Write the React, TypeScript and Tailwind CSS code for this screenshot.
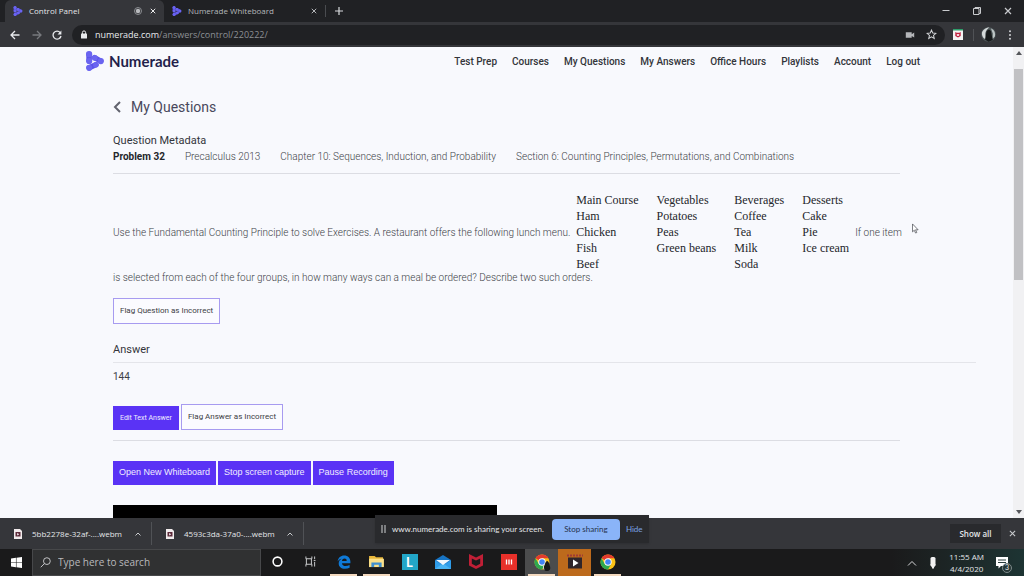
import type { ReactNode } from "react";

const UI_FONT = "font-['Lato','Noto_Sans',sans-serif]";

function NumeradeMark({ className }: { className: string }) {
  return (
    <svg viewBox="0 0 18 20" className={className} aria-hidden="true">
      <g fill="none" stroke="#5b52e8" strokeLinecap="round">
        <path d="M3.100 3.200v6.500" strokeWidth="5.600" />
        <path d="M8.500 6.600l6.200 3.400" strokeWidth="5.400" />
        <path d="M3.200 16.800l6.800-3.200" strokeWidth="5.400" />
      </g>
      <g fill="#6a64f0">
        <circle cx="3.100" cy="3.200" r="3.100" />
        <circle cx="3.200" cy="10" r="3.100" />
        <circle cx="8.800" cy="6.800" r="2.900" />
        <circle cx="14.800" cy="10.100" r="3.100" />
        <circle cx="3.200" cy="16.800" r="3.100" />
        <circle cx="9.800" cy="13.700" r="2.800" />
      </g>
    </svg>
  );
}

function Cross({ className }: { className: string }) {
  return (
    <svg viewBox="0 0 8 8" className={className} fill="none" stroke="currentColor" strokeWidth="1.2" aria-hidden="true">
      <path d="M1 1l6 6M7 1L1 7" />
    </svg>
  );
}

function TabStrip() {
  return (
    <div className="flex h-[22px] shrink-0 items-stretch bg-[#202124] pl-[5px] font-['Open_Sans',sans-serif] text-[8px] text-[#b4b7bb]">
      <div className="flex w-[159px] items-center rounded-t-md bg-[#35363a] px-2 text-[#e4e6e9]">
        <NumeradeMark className="h-[10px] w-[10px]" />
        <span className="ml-[6px] flex-1">Control Panel</span>
        <svg viewBox="0 0 8 8" className="h-2 w-2" aria-hidden="true">
          <circle cx="4" cy="4" r="3.5" fill="none" stroke="#8b8d91" />
          <circle cx="4" cy="4" r="2.2" fill="#b9bbbe" />
        </svg>
        <button aria-label="Close Control Panel" className="ml-2 text-white">
          <Cross className="h-[6px] w-[6px]" />
        </button>
      </div>
      <div className="flex w-[161px] items-center px-2">
        <NumeradeMark className="h-[10px] w-[10px]" />
        <span className="ml-[6px] flex-1">Numerade Whiteboard</span>
        <button aria-label="Close Numerade Whiteboard" className="text-[#c4c6c9]">
          <Cross className="h-[6px] w-[6px]" />
        </button>
      </div>
      <div className="my-auto h-3 w-px bg-[#4a4c50]" />
      <button aria-label="New tab" className="ml-[9px] text-[#d8dadd]">
        <svg viewBox="0 0 8 8" className="h-2 w-2" stroke="currentColor" strokeWidth="1.2" aria-hidden="true">
          <path d="M4 0v8M0 4h8" />
        </svg>
      </button>
      <div className="ml-auto flex items-center gap-[23px] pr-3 text-[#c9cbce]">
        <button aria-label="Minimize">
          <svg viewBox="0 0 8 8" className="h-2 w-2" stroke="currentColor" aria-hidden="true">
            <path d="M.5 3.5h7" />
          </svg>
        </button>
        <button aria-label="Restore">
          <svg viewBox="0 0 8 8" className="h-2 w-2" fill="none" stroke="currentColor" aria-hidden="true">
            <path d="M.5 1.500h5.500v6H.5zM2 1.500V.5h5.500v6H6" />
          </svg>
        </button>
        <button aria-label="Close window">
          <Cross className="h-2 w-2" />
        </button>
      </div>
    </div>
  );
}

function Toolbar() {
  return (
    <div className="flex h-[25px] shrink-0 items-center bg-[#35363a] pr-3 pl-[10px]">
      <button aria-label="Back" className="text-[#e8eaed]">
        <svg viewBox="0 0 10 10" className="h-[10px] w-[10px]" fill="none" stroke="currentColor" strokeWidth="1.3" aria-hidden="true">
          <path d="M9.500 5H1M5 1L1 5l4 4" />
        </svg>
      </button>
      <button aria-label="Forward" className="ml-3 text-[#77797d]">
        <svg viewBox="0 0 10 10" className="h-[10px] w-[10px]" fill="none" stroke="currentColor" strokeWidth="1.3" aria-hidden="true">
          <path d="M.5 5H9M5 1l4 4-4 4" />
        </svg>
      </button>
      <button aria-label="Reload" className="ml-[10px] text-[#e8eaed]">
        <svg viewBox="0 0 10 10" className="h-[10px] w-[10px]" aria-hidden="true">
          <path d="M8.200 2.600A4 4 0 1 0 9 6" fill="none" stroke="currentColor" strokeWidth="1.3" />
          <path d="M9.400.6v3.900H5.500z" fill="currentColor" />
        </svg>
      </button>
      <div className="ml-[10px] flex h-5 flex-1 items-center rounded-full bg-[#202124] pr-2 pl-2">
        <svg viewBox="0 0 8 9" className="h-[9px] w-2" aria-hidden="true">
          <rect x="1" y="3.600" width="6" height="5" rx=".6" fill="#e8eaed" />
          <path d="M2.400 4V2.500a1.600 1.600 0 0 1 3.200 0V4" fill="none" stroke="#e8eaed" />
        </svg>
        <p className="ml-[7px] flex-1 font-['Open_Sans',sans-serif] text-[9px] text-[#8d9094]">
          <span className="text-[#e8eaed]">numerade.com</span>/answers/control/220222/
        </p>
        <svg viewBox="0 0 10 8" className="h-2 w-[10px]" fill="#b4b6b9" aria-hidden="true">
          <path d="M.8 1.200h5.900v2L9.200 1.600v4.800L6.700 5v1.800H.8z" />
        </svg>
        <button aria-label="Bookmark this page" className="ml-[11px]">
          <svg viewBox="0 0 12 12" className="h-[11px] w-[11px]" fill="none" stroke="#d0d2d5" strokeWidth="1.1" aria-hidden="true">
            <path d="M6 1.200l1.400 3.200 3.500.3-2.700 2.300.8 3.400L6 8.600l-3 1.800.8-3.400L1.100 4.700l3.500-.3z" />
          </svg>
        </button>
      </div>
      <svg viewBox="0 0 10 11" className="ml-2 h-[11px] w-[10px]" aria-hidden="true">
        <path d="M0 0h10v11H0z" fill="#f4f4f4" />
        <path d="M0 0h10v1.500H0z" fill="#2e9e6b" />
        <path d="M2.300 3l1.400.8h2.600l1.400-.8v4L5 8.600 2.300 7z" fill="#c01f3d" />
        <path d="M3.800 4.800l1.200.7 1.200-.7v1.600L5 7.100l-1.200-.7z" fill="#fff" />
      </svg>
      <div className="ml-[10px] h-3 w-px bg-[#505256]" />
      <svg viewBox="0 0 15 15" className="ml-[7px] h-[15px] w-[15px]" aria-hidden="true">
        <circle cx="7.500" cy="7.500" r="7.300" fill="#50595b" />
        <path d="M1 5.500C2.400 1.600 6 .2 8.500.4 6.200 1.600 4 4.500 4.400 8l1 4.500C2 11.500.6 8.500 1 5.500z" fill="#d3d8d8" />
        <path d="M10 1.500c3.200 1 4.800 4.500 3.900 8l-2.300 2.600.2-5.600z" fill="#bcc4c4" />
        <path d="M5.500 4.500c1-2.300 3.600-2.400 4.500-.2l.8 4.200 1 4.600-4.300 1.600-3.500-2.200z" fill="#16191a" />
      </svg>
      <button aria-label="Chrome menu" className="ml-3">
        <svg viewBox="0 0 4 10" className="h-[10px] w-1" fill="#d0d2d5" aria-hidden="true">
          <circle cx="2" cy="1.200" r="1" />
          <circle cx="2" cy="5" r="1" />
          <circle cx="2" cy="8.800" r="1" />
        </svg>
      </button>
    </div>
  );
}

const NAV = ["Test Prep", "Courses", "My Questions", "My Answers", "Office Hours", "Playlists", "Account", "Log out"];

function SiteHeader() {
  return (
    <header className="flex h-7 items-center justify-between pr-[93px] pl-[86px]">
      <a href="#home" className="flex items-center gap-[5px] font-['Lato',sans-serif] text-[15px] font-bold text-[#231f4b]">
        <NumeradeMark className="h-5 w-[18px]" />
        Numerade
      </a>
      <nav className="flex gap-[15px] text-[10px] font-medium whitespace-nowrap text-[#33353a]">
        {NAV.map((item) => (
          <a key={item} href={"#" + item}>
            {item}
          </a>
        ))}
      </nav>
    </header>
  );
}

const MENU_HEAD = ["Main Course", "Vegetables", "Beverages", "Desserts"];
const MENU_ROWS = [
  ["Ham", "Potatoes", "Coffee", "Cake"],
  ["Chicken", "Peas", "Tea", "Pie"],
  ["Fish", "Green beans", "Milk", "Ice cream"],
  ["Beef", "", "Soda", ""],
];

function LunchMenu() {
  return (
    <table className="font-['Liberation_Serif',serif] text-[12px] leading-4 font-normal whitespace-nowrap text-[#24262b]">
      <thead>
        <tr>
          {MENU_HEAD.map((h) => (
            <th key={h} scope="col" className="p-0 pr-[18px] text-left font-normal last:pr-0">
              {h}
            </th>
          ))}
        </tr>
      </thead>
      <tbody>
        {MENU_ROWS.map((row) => (
          <tr key={row[0]}>
            {row.map((cell, i) => (
              <td key={i} className="p-0 pr-[18px] last:pr-0">
                {cell}
              </td>
            ))}
          </tr>
        ))}
      </tbody>
    </table>
  );
}

function OutlineButton({ children }: { children: ReactNode }) {
  return (
    <button className="h-[26px] border border-[#a79bf0] bg-[#fbfbff] px-[6px] text-[8px] whitespace-nowrap text-[#3b3d44]">
      {children}
    </button>
  );
}

function RecordButton({ children }: { children: ReactNode }) {
  return (
    <button className="h-6 bg-[#5a33f5] px-[6px] font-['Liberation_Sans',sans-serif] text-[9px] whitespace-nowrap text-[#f1eeff]">
      {children}
    </button>
  );
}

function QuestionPage() {
  return (
    <main className="px-[113px] pt-[22px] text-[10px] text-[#3c3f47]">
      <h1 className="flex h-5 items-center gap-[10px] text-[14px] text-[#48485c]">
        <a href="#questions" aria-label="Back to questions">
          <svg viewBox="0 0 8 12" className="h-3 w-2" fill="none" stroke="#62636e" strokeWidth="2" aria-hidden="true">
            <path d="M7 1L2 6l5 5" />
          </svg>
        </a>
        My Questions
      </h1>
      <section className="mt-4 border-b border-[#dcdde3] pb-2">
        <h2 className="text-[11px] leading-4 text-[#33353b]">Question Metadata</h2>
        <div className="flex gap-5 leading-4 font-light whitespace-nowrap">
          <strong className="font-bold text-[#24262b]">Problem 32</strong>
          <span>Precalculus 2013</span>
          <span>Chapter 10: Sequences, Induction, and Probability</span>
          <span>Section 6: Counting Principles, Permutations, and Combinations</span>
        </div>
      </section>
      <section className="mt-[18px]">
        <div className="flex items-center gap-[6px] font-light whitespace-nowrap">
          <span>Use the Fundamental Counting Principle to solve Exercises. A restaurant offers the following lunch menu.</span>
          <LunchMenu />
          <span>If one item</span>
        </div>
        <p className="mb-[14px] leading-3 font-light">
          is selected from each of the four groups, in how many ways can a meal be ordered? Describe two such orders.
        </p>
        <OutlineButton>Flag Question as Incorrect</OutlineButton>
      </section>
      <section className="mt-[18px]">
        <h2 className="-mr-[76px] border-b border-[#e4e5ea] pb-1 text-[11px] leading-4 text-[#33353b]">Answer</h2>
        <p className="mt-[6px] text-[10px] leading-4">144</p>
        <div className="mt-[19px] flex items-end gap-[2px] border-b border-[#dcdde3] pb-[10px]">
          <button className="h-6 bg-[#5a33f5] px-[7px] text-[7px] whitespace-nowrap text-[#f1eeff]">Edit Text Answer</button>
          <OutlineButton>Flag Answer as Incorrect</OutlineButton>
        </div>
      </section>
      <section className="mt-5">
        <div className="flex gap-[2px]">
          <RecordButton>Open New Whiteboard</RecordButton>
          <RecordButton>Stop screen capture</RecordButton>
          <RecordButton>Pause Recording</RecordButton>
        </div>
        <div className="mt-5 h-[216px] w-[384px] bg-black" />
      </section>
    </main>
  );
}

function Scrollbar() {
  return (
    <div className="flex w-[11px] shrink-0 flex-col items-center bg-[#f1f1f3] py-1" aria-hidden="true">
      <svg viewBox="0 0 6 4" className="h-1 w-[6px]" fill="#55575b">
        <path d="M3 0l3 4H0z" />
      </svg>
      <div className="mt-[14px] h-[211px] w-[9px] bg-[#c1c1c4]" />
      <svg viewBox="0 0 6 4" className="mt-auto h-1 w-[6px]" fill="#55575b">
        <path d="M3 4l3-4H0z" />
      </svg>
    </div>
  );
}

function Download({ name }: { name: string }) {
  return (
    <div className="my-1 flex w-[152px] items-center border-r border-[#505256] pl-[14px]">
      <svg viewBox="0 0 8 10" className="h-[10px] w-2" aria-hidden="true">
        <path d="M0 0h6l2 2v8H0z" fill="#f1ebec" />
        <path d="M1.500 3h5v4.500h-5z" fill="#5d2a3a" />
        <path d="M3.200 4l2 1.200-2 1.200z" fill="#fff" />
      </svg>
      <span className="ml-[10px] flex-1">{name}</span>
      <button aria-label={"Options for " + name} className="mr-[10px]">
        <svg viewBox="0 0 6 4" className="h-1 w-[6px]" fill="none" stroke="#c9cbce" aria-hidden="true">
          <path d="M.5 3.500L3 1l2.500 2.500" />
        </svg>
      </button>
    </div>
  );
}

function DownloadShelf() {
  return (
    <div className="flex h-[31px] shrink-0 items-stretch bg-[#35363a] font-['Open_Sans',sans-serif] text-[8px] text-[#e4e6e9]">
      <Download name="5bb2278e-32af-....webm" />
      <Download name="4593c3da-37a0-....webm" />
      <div className="ml-auto flex items-center gap-2 pr-2">
        <button className="h-[19px] w-[51px] bg-[#292a2d] font-semibold">Show all</button>
        <button aria-label="Close downloads" className="text-[#c9cbce]">
          <Cross className="h-[7px] w-[7px]" />
        </button>
      </div>
    </div>
  );
}

function SharingBar() {
  return (
    <div className="absolute bottom-[33px] left-[375px] flex h-7 items-center bg-[#292a2d] px-[6px] text-[8px] whitespace-nowrap text-[#e4e6e9] shadow">
      <svg viewBox="0 0 5 8" className="h-2 w-[5px]" stroke="#d0d2d5" aria-hidden="true">
        <path d="M1 0v8M4 0v8" />
      </svg>
      <span className="ml-[6px]">www.numerade.com is sharing your screen.</span>
      <button className="ml-2 h-[21px] w-[68px] rounded-sm bg-[#8ab4f8] text-[#26334d]">Stop sharing</button>
      <button className="ml-[6px] text-[#7ba3e6]">Hide</button>
    </div>
  );
}

function TaskItem({ label, open, tint, children }: { label: string; open?: boolean; tint?: string; children: ReactNode }) {
  return (
    <button aria-label={label} className={"flex w-[33px] flex-col items-center " + (tint ?? "")}>
      <span className="flex flex-1 items-center">{children}</span>
      <span className={"h-[2px] w-[27px] " + (open ? "bg-[#f3d9bf]" : "")} />
    </button>
  );
}

function ChromeLogo() {
  return (
    <svg viewBox="0 0 16 16" className="h-4 w-4" aria-hidden="true">
      <circle cx="8" cy="8" r="7.500" fill="#fbc116" />
      <path d="M8 8L1.500 4.250A7.500 7.500 0 0 1 14.500 4.250H8z" fill="#e33b2e" />
      <path d="M1.500 4.250A7.500 7.500 0 0 0 8 15.500L11.200 9.900 4.800 9.900z" fill="#2da94f" />
      <circle cx="8" cy="8" r="3.700" fill="#fff" />
      <circle cx="8" cy="8" r="2.800" fill="#4285f4" />
    </svg>
  );
}

function Taskbar() {
  return (
    <div className="flex h-[27px] shrink-0 items-stretch bg-[#1a1a1b] text-[#e4e6e9]">
      <button aria-label="Start" className="flex w-8 items-center justify-center">
        <svg viewBox="0 0 12 12" className="h-[11px] w-[11px]" fill="#fff" aria-hidden="true">
          <path d="M0 1.700l5.400-.8v4.800H0zM6 .8L12 0v5.700H6zM0 6.300h5.400v4.800L0 10.300zM6 6.300h6V12l-6-.8z" />
        </svg>
      </button>
      <label className="flex w-[229px] items-center border border-[#47484a] bg-[#303132] pl-[7px]">
        <svg viewBox="0 0 12 12" className="h-[11px] w-[11px]" fill="none" stroke="#cfd0d2" aria-hidden="true">
          <circle cx="7.500" cy="4.500" r="3.700" />
          <path d="M4.900 7.100L.8 11.200" />
        </svg>
        <input
          aria-label="Search"
          placeholder="Type here to search"
          className="ml-[7px] min-w-0 flex-1 bg-transparent font-['Open_Sans',sans-serif] text-[10px] outline-none placeholder:text-[#b9babc]"
        />
      </label>
      <TaskItem label="Cortana">
        <svg viewBox="0 0 12 12" className="h-[11px] w-[11px]" fill="none" stroke="#fff" strokeWidth="1.700" aria-hidden="true">
          <circle cx="6" cy="6" r="4.800" />
        </svg>
      </TaskItem>
      <TaskItem label="Task view">
        <svg viewBox="0 0 12 12" className="h-[11px] w-[11px]" fill="none" stroke="#d8d9db" aria-hidden="true">
          <path d="M1 .5V3h6.500V.5M1 11.500V9h6.500v2.500M1.500 3v6M7 3v6M10.500.5v3M10.500 6.500v5M9.500 5h2" />
        </svg>
      </TaskItem>
      <TaskItem label="Edge" open>
        <svg viewBox="0 0 14 14" className="h-[14px] w-[14px]" aria-hidden="true">
          <path
            d="M.6 6.400C1.100 2.700 3.700.4 7.200.4c3.900 0 6.200 2.700 6.200 6.200v1.600H5c.1 1.900 1.500 2.800 3.600 2.800 1.400 0 2.800-.4 4-1.100v2.800c-1.300.7-2.900 1-4.600 1-3.900 0-6.300-2.100-6.300-5.300 0-2.100 1.200-3.700 3-4.600C2.600 4.100 1.400 5 .6 6.400zM5 5.900h4.700c0-1.500-.8-2.300-2.200-2.300S5.200 4.500 5 5.900z"
            fill="#0f7ad8"
          />
        </svg>
      </TaskItem>
      <TaskItem label="File Explorer" open>
        <svg viewBox="0 0 16 14" className="h-[13px] w-[15px]" aria-hidden="true">
          <path d="M0 1h6l1.500 1.500H15V13H0z" fill="#e8b73a" />
          <path d="M0 4h16v9H0z" fill="#fbe08a" />
          <path d="M2.500 13V8h11v5h-3v-2.500h-5V13z" fill="#3f8fd0" />
        </svg>
      </TaskItem>
      <TaskItem label="L">
        <span className="flex h-4 w-4 items-center justify-center bg-[#22a6c8] text-[13px] leading-4 font-bold text-white">
          L
        </span>
      </TaskItem>
      <TaskItem label="Mail">
        <svg viewBox="0 0 16 14" className="h-[14px] w-4" aria-hidden="true">
          <path d="M0 5l8-5 8 5v9H0z" fill="#1774c4" />
          <path d="M0 5.200l8 5 8-5V14H0z" fill="#2f9ce8" />
          <path d="M0 14l7-5h2l7 5z" fill="#49b3f2" />
          <path d="M1 5h14L8 10z" fill="#f1f7fc" />
        </svg>
      </TaskItem>
      <TaskItem label="McAfee">
        <svg viewBox="0 0 14 15" className="h-[15px] w-[14px]" aria-hidden="true">
          <path d="M0 0l7 3.400L14 0v11.500L7 15l-7-3.500zM2.800 4.400v5.400L7 12l4.200-2.200V4.400L7 6.400z" fill="#c01f36" fillRule="evenodd" />
        </svg>
      </TaskItem>
      <TaskItem label="Media">
        <svg viewBox="0 0 16 16" className="h-4 w-4" aria-hidden="true">
          <path d="M0 0h16v16H0z" fill="#e8302a" />
          <path d="M5.500 5.500v5M8 5.500v5M10.500 5.500v5" stroke="#fff" strokeWidth="1.300" />
        </svg>
      </TaskItem>
      <TaskItem label="Chrome, sharing" open tint="bg-[#4b4c4d]">
        <span className="relative">
          <ChromeLogo />
          <svg viewBox="0 0 8 10" className="absolute -right-px -bottom-px h-[10px] w-2" aria-hidden="true">
            <path d="M4 0c2.200.6 2 3 3 5.500S6.500 10 4 10 0 8 1 5.500 2.500.8 4 0z" fill="#181a1b" />
            <path d="M1.200 3.500C.2 5 .2 7 1 8.500" stroke="#d5dada" fill="none" />
          </svg>
        </span>
      </TaskItem>
      <TaskItem label="Video editor" tint="bg-[#bd6a1c]">
        <svg viewBox="0 0 16 16" className="h-4 w-4" aria-hidden="true">
          <path d="M0 1.500h16" stroke="#a13a34" strokeWidth="2" strokeDasharray="2 1" />
          <path d="M1 3.500h14v11H1z" fill="#30252a" />
          <path d="M6 5.500l5.500 3.500L6 12.500z" fill="#fff" />
        </svg>
      </TaskItem>
      <TaskItem label="Chrome" open>
        <ChromeLogo />
      </TaskItem>
      <div className="ml-auto flex items-center bg-gradient-to-r from-[#1a1a1b] to-[#1d3433] pl-4">
        <button aria-label="Show hidden icons">
          <svg viewBox="0 0 10 6" className="h-[6px] w-[10px]" fill="none" stroke="#d8d9db" aria-hidden="true">
            <path d="M1 5.500l4-4 4 4" />
          </svg>
        </button>
        <svg viewBox="0 0 8 12" className="ml-3 h-3 w-2" fill="#f1f1f1" aria-hidden="true">
          <rect x="1.500" y="0" width="5" height="9" rx="1.500" />
          <path d="M1 7.500h6L5 10.500v1H3v-1z" />
        </svg>
        <div className="ml-3 text-center font-['Open_Sans',sans-serif] text-[8px] leading-3">
          <div>11:55 AM</div>
          <div>4/4/2020</div>
        </div>
        <button aria-label="Notifications, 3 new" className="relative mr-4 ml-3">
          <svg viewBox="0 0 12 12" className="h-3 w-3" aria-hidden="true">
            <path d="M0 0h12v9H5l-2.500 2.500V9H0z" fill="#fff" />
            <path d="M2 3h8M2 5.500h8" stroke="#2a3e3d" />
          </svg>
          <span className="absolute -right-1 -bottom-1 flex h-[10px] w-[10px] items-center justify-center rounded-full border border-[#7d8a8a] bg-[#263736] text-[7px] leading-none">
            3
          </span>
        </button>
      </div>
    </div>
  );
}

export default function App() {
  return (
    <div className={"relative flex h-screen flex-col overflow-hidden bg-[#f8f9fd] " + UI_FONT}>
      <TabStrip />
      <Toolbar />
      <div className="relative flex min-h-0 flex-1">
        <div className="min-w-0 flex-1 overflow-hidden font-['Roboto',sans-serif]">
          <SiteHeader />
          <QuestionPage />
        </div>
        <Scrollbar />
        <svg viewBox="0 0 8 12" className="absolute top-[176px] right-[105px] h-[11px] w-[7px]" aria-hidden="true">
          <path d="M.6.8v9l2-1.800 1.500 3.200 1.400-.6L4 7.500h3z" fill="#fff" stroke="#44464c" strokeWidth=".8" />
        </svg>
      </div>
      <DownloadShelf />
      <Taskbar />
      <SharingBar />
    </div>
  );
}
